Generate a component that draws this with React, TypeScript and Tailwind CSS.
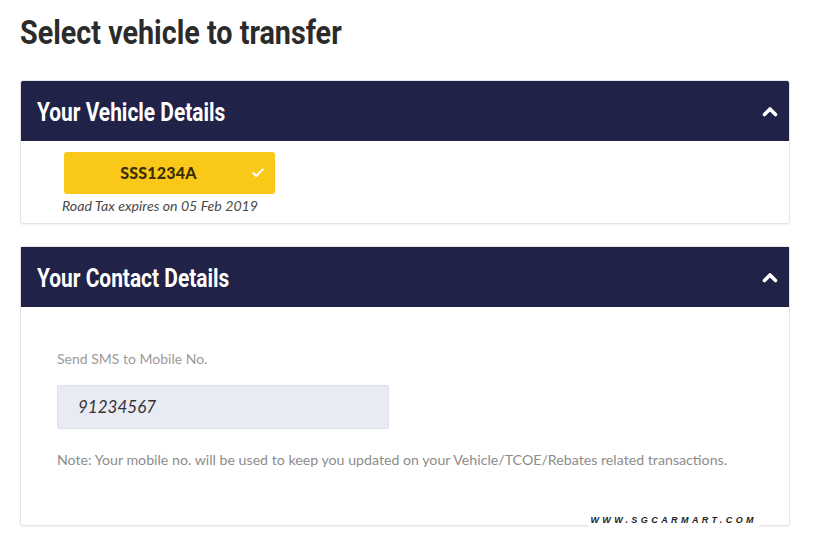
import { Check } from 'lucide-react';

function ChevronUp() {
  return (
    <svg width="16" height="12" viewBox="0 0 16 12" className="block">
      <polyline points="2.5,9.5 8,4 13.5,9.5" fill="none" stroke="#fff" strokeWidth="3.6" strokeLinecap="round" strokeLinejoin="round" />
    </svg>
  );
}

function PanelHeader({ title }: { title: string }) {
  return (
    <div className="flex h-[60px] items-center justify-between bg-[#212248] pl-[16px] pr-[11px]">
      <h2 className="origin-left scale-x-[0.82] pt-[3px] font-['Roboto',sans-serif] text-[25.5px] font-bold whitespace-nowrap text-white">
        {title}
      </h2>
      <ChevronUp />
    </div>
  );
}

export default function App() {
  return (
    <div className="relative min-h-[552px] w-[828px] overflow-hidden bg-white font-['Lato',sans-serif]">
      <div className="px-[20px] pt-[12px]">
        <h1 className="origin-left scale-x-[0.845] font-['Roboto',sans-serif] text-[34px] leading-[40px] font-bold whitespace-nowrap text-[#2b2b2b]">
          Select vehicle to transfer
        </h1>

        {/* Vehicle details */}
        <section className="mt-[28px] w-[770px] overflow-hidden rounded-[3px] border border-[#e3e3e3] shadow-[0_1px_2px_rgba(0,0,0,0.06)]">
          <PanelHeader title="Your Vehicle Details" />
          <div className="h-[82px] pt-[11px] pl-[43px]">
            <div className="relative flex h-[42px] w-[211px] items-center justify-center rounded-[3px] bg-[#fac818] pr-[22px]">
              <span className="text-[16px] font-black tracking-[0.2px] text-[#3b2f06]">SSS1234A</span>
              <Check size={14} strokeWidth={3.5} className="absolute right-[10px] text-white" />
            </div>
            <p className="mt-[1px] -ml-[2px] text-[14.2px] italic text-[#4a4a4a]">Road Tax expires on 05 Feb 2019</p>
          </div>
        </section>

        {/* Contact details */}
        <section className="relative mt-[22px] w-[770px] rounded-[3px] border border-[#e3e3e3] shadow-[0_1px_2px_rgba(0,0,0,0.06)]">
          <PanelHeader title="Your Contact Details" />
          <div className="h-[218px] pt-[42px] pl-[36px]">
            <p className="text-[14px] leading-[20px] text-[#9a9a9a]">Send SMS to Mobile No.</p>
            <div className="mt-[16px] flex h-[44px] w-[332px] items-center rounded-[2px] border border-[#dde1ea] bg-[#e8ebf4] pl-[20px]">
              <span className="text-[17px] italic text-[#333]">91234567</span>
            </div>
            <p className="mt-[21px] text-[14.2px] leading-[20px] text-[#8c8c8c]">
              Note: Your mobile no. will be used to keep you updated on your Vehicle/TCOE/Rebates related transactions.
            </p>
          </div>
          <span className="absolute right-[30px] bottom-[-2px] bg-white px-[2px] font-['Liberation_Sans',Arial,sans-serif] text-[9px] font-bold italic tracking-[0.38em] text-[#222]">
            WWW.SGCARMART.COM
          </span>
        </section>
      </div>
    </div>
  );
}
